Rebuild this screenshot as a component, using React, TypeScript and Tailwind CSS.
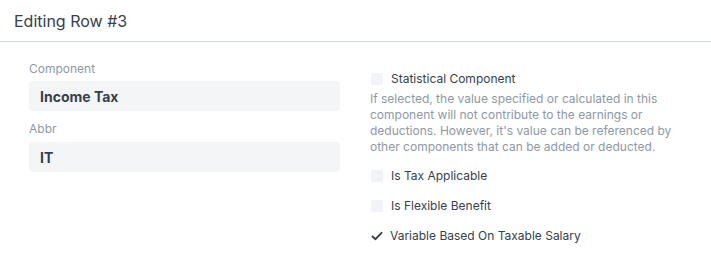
import React from "react";

function Check({ checked }: { checked?: boolean }) {
  if (checked) {
    return (
      <svg width="12" height="12" viewBox="0 0 12 12" className="shrink-0">
        <path d="M1.5 6.5 L4.5 9.2 L10.5 2.8" fill="none" stroke="#36414c" strokeWidth="1.9" strokeLinecap="round" strokeLinejoin="round" />
      </svg>
    );
  }
  return <div className="w-[12px] h-[12px] shrink-0 rounded-[2px] bg-[#f1f3f6]" />;
}

export default function App() {
  return (
    <div className="w-[711px] h-[270px] bg-white text-[#36414c]" style={{ fontFamily: "Inter, 'Noto Sans', sans-serif" }}>
      <div className="h-[42px] border-b border-[#d1d8dd] flex items-center pl-[14px]">
        <span className="text-[16px] leading-none">Editing Row #3</span>
      </div>
      <div className="flex pl-[14px] pt-[19px]">
        <div className="w-[341px] px-[15px]">
          <div className="text-[12px] text-[#8d99a6] leading-[16px] mb-[4px]">Component</div>
          <div className="h-[30px] rounded-[4px] bg-[#f4f5f6] flex items-center px-[11px] text-[14px] font-bold">Income Tax</div>
          <div className="text-[12px] text-[#8d99a6] leading-[16px] mt-[10px] mb-[5px]">Abbr</div>
          <div className="h-[30px] rounded-[4px] bg-[#f4f5f6] flex items-center px-[11px] text-[14px] font-bold">IT</div>
        </div>
        <div className="w-[341px] px-[15px] pt-[10px]">
          <div className="flex items-center gap-[8px] pl-[1px] h-[16px] text-[12px]">
            <Check />
            <span>Statistical Component</span>
          </div>
          <div className="text-[12px] leading-[16px] text-[#8d99a6] mt-[4px]">
            If selected, the value specified or calculated in this component will not contribute to the earnings or deductions. However, it's value can be referenced by other components that can be added or deducted.
          </div>
          <div className="flex items-center gap-[8px] pl-[1px] h-[16px] text-[12px] mt-[13px]">
            <Check />
            <span>Is Tax Applicable</span>
          </div>
          <div className="flex items-center gap-[8px] pl-[1px] h-[16px] text-[12px] mt-[14px]">
            <Check />
            <span>Is Flexible Benefit</span>
          </div>
          <div className="flex items-center gap-[7px] pl-[1px] h-[16px] text-[12px] mt-[14px]">
            <Check checked />
            <span>Variable Based On Taxable Salary</span>
          </div>
        </div>
      </div>
    </div>
  );
}
